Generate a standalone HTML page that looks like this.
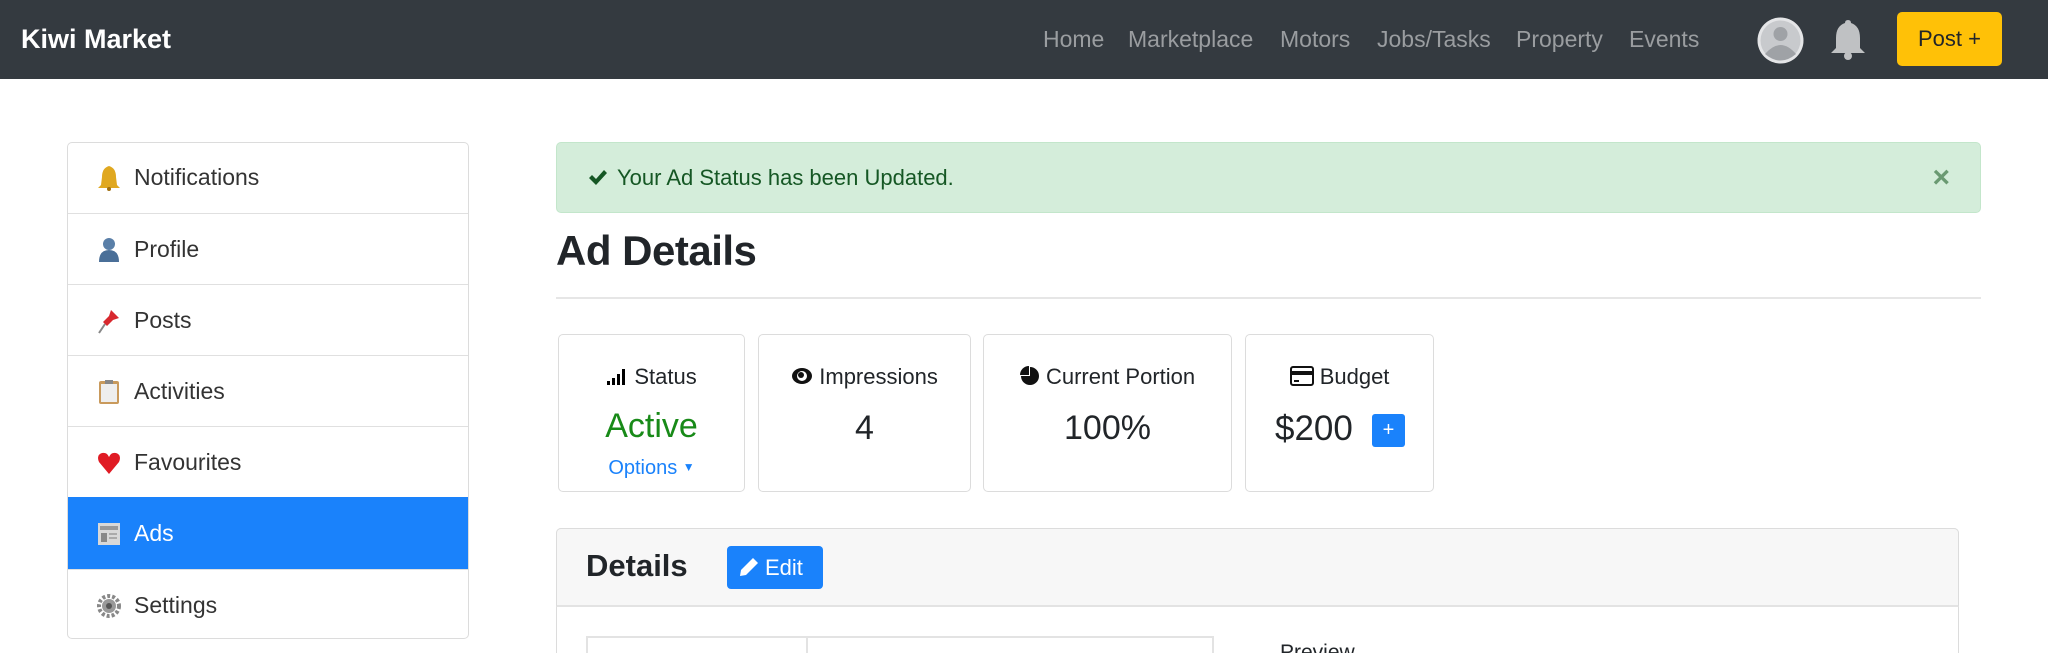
<!DOCTYPE html>
<html style="height:653px;overflow:hidden"><head><meta charset="utf-8"><style>
*{box-sizing:border-box;margin:0;padding:0}
body{width:2048px;height:653px;overflow:hidden;background:#fff;font-family:"Liberation Sans",sans-serif;color:#212529;position:relative}
.a{position:absolute}
.nav{left:0;top:0;width:2048px;height:79px;background:#343a40}
.brand{left:21px;top:24px;font-size:27px;font-weight:bold;color:#fff}
.nl{top:26px;font-size:23px;color:#9a9da0}
.post{left:1897px;top:12px;width:105px;height:54px;background:#ffc107;border-radius:5px;font-size:22px;color:#212529;text-align:center;line-height:54px}
.side{left:67px;top:142px;width:402px;height:497px;border:1px solid #dcdcdc;border-radius:5px;overflow:hidden}
.it{position:absolute;left:0;width:400px;height:71px;border-top:1px solid #e0e0e0;font-size:23px;color:#333;line-height:71px;padding-left:66px}
.it svg{position:absolute;left:29px;top:23px}
.alert{left:556px;top:142px;width:1425px;height:71px;background:#d4edda;border:1px solid #c3e6cb;border-radius:5px;color:#155724;font-size:22px;line-height:69px;padding-left:60px}
.card{top:334px;height:158px;border:1px solid #dcdcdc;border-radius:5px;text-align:center}
.ct{position:absolute;left:0;right:0;top:29px;font-size:22px;color:#212529}
</style></head><body>
<div class="a nav"></div>
<div class="a brand">Kiwi Market</div>
<div class="a nl" style="left:1043px">Home</div>
<div class="a nl" style="left:1128px">Marketplace</div>
<div class="a nl" style="left:1280px">Motors</div>
<div class="a nl" style="left:1377px">Jobs/Tasks</div>
<div class="a nl" style="left:1516px">Property</div>
<div class="a nl" style="left:1629px">Events</div>
<svg class="a" style="left:1757px;top:17px" width="47" height="47" viewBox="0 0 47 47"><circle cx="23.5" cy="23.5" r="23" fill="#e4e5e7"/><circle cx="23.5" cy="23.5" r="20" fill="#c8cacd"/><circle cx="23.5" cy="17" r="7" fill="#9fa2a6"/><path d="M8 37 Q23.5 19 39 37 Q23.5 50 8 37Z" fill="#9fa2a6"/></svg>
<svg class="a" style="left:1829px;top:18px" width="38" height="42" viewBox="0 0 38 42"><path d="M19 2 Q22 2 22 5 Q31 8 31 20 L31 30 L36 35 L2 35 L7 30 L7 20 Q7 8 16 5 Q16 2 19 2Z" fill="#bfc1c3"/><circle cx="19" cy="38" r="4" fill="#bfc1c3"/></svg>
<div class="a post">Post +</div>

<div class="a side">
<div class="it" style="top:-1px;border-top:none">
<svg width="24" height="26" viewBox="0 0 24 26"><path d="M12 1 Q19 3 19 12 L20 20 L23 23 L1 23 L4 20 L5 12 Q5 3 12 1Z" fill="#e0a820"/><circle cx="12" cy="24" r="2" fill="#a07010"/></svg>Notifications</div>
<div class="it" style="top:70px"><svg width="24" height="26" viewBox="0 0 24 26"><circle cx="12" cy="7" r="6" fill="#5a7fa8"/><path d="M2 25 Q2 13 12 13 Q22 13 22 25Z" fill="#4a6f98"/></svg>Profile</div>
<div class="it" style="top:141px"><svg width="24" height="26" viewBox="0 0 24 26"><path d="M14 2 L22 10 L16 12 L10 18 L6 14 L12 8Z" fill="#d8282e"/><path d="M8 16 L2 25" stroke="#888" stroke-width="2"/></svg>Posts</div>
<div class="it" style="top:212px"><svg width="24" height="26" viewBox="0 0 24 26"><rect x="2" y="2" width="20" height="23" rx="2" fill="#c99a5c"/><rect x="4" y="5" width="16" height="18" fill="#eee"/><rect x="8" y="1" width="8" height="4" fill="#888"/></svg>Activities</div>
<div class="it" style="top:283px"><svg width="24" height="26" viewBox="0 0 24 26"><path d="M12 24 L2 12 Q-1 5 5 3 Q10 2 12 7 Q14 2 19 3 Q25 5 22 12Z" fill="#e01b24"/></svg>Favourites</div>
<div class="it" style="top:354px;background:#1a82fb;color:#fff;border-top-color:#1a82fb;height:72px"><svg width="24" height="26" viewBox="0 0 24 26"><rect x="1" y="2" width="22" height="22" fill="#d8d8d8"/><rect x="3" y="5" width="18" height="4" fill="#999"/><rect x="4" y="12" width="6" height="9" fill="#888"/><rect x="12" y="12" width="8" height="2" fill="#aaa"/><rect x="12" y="16" width="8" height="2" fill="#aaa"/></svg>Ads</div>
<div class="it" style="top:426px"><svg width="24" height="26" viewBox="0 0 24 26"><circle cx="12" cy="13" r="10" fill="none" stroke="#888" stroke-width="4" stroke-dasharray="3 2"/><circle cx="12" cy="13" r="7" fill="#999"/><circle cx="12" cy="13" r="3" fill="#555"/></svg>Settings</div>
</div>

<div class="a alert"><svg class="a" style="left:31px;top:26px" width="20" height="18" viewBox="0 0 20 18"><path d="M1 9 L4 6 L8 10 L16 1 L19 4 L8 16Z" fill="#155724"/></svg>Your Ad Status has been Updated.<span class="a" style="right:30px;top:0;color:#6a9a72;font-size:30px;font-weight:bold">×</span></div>

<div class="a" style="left:556px;top:227px;font-size:42px;font-weight:bold;letter-spacing:-0.5px">Ad Details</div>
<div class="a" style="left:556px;top:297px;width:1425px;height:2px;background:#e6e6e6"></div>

<div class="a card" style="left:558px;width:187px">
<div class="ct"><svg width="22" height="18" viewBox="0 0 22 18" style="vertical-align:-1px"><rect x="1" y="14" width="3" height="4"/><rect x="6" y="11" width="3" height="7"/><rect x="11" y="7" width="3" height="11"/><rect x="16" y="2" width="3" height="16"/></svg> Status</div>
<div class="a" style="left:0;right:0;top:72px;font-size:34px;color:#188a18">Active</div>
<div class="a" style="left:0;right:0;top:122px;font-size:20px;color:#1a82fb">Options <span style="font-size:12px;vertical-align:3px">▼</span></div>
</div>
<div class="a card" style="left:758px;width:213px">
<div class="ct"><svg width="22" height="18" viewBox="0 0 22 18" style="vertical-align:-1px"><ellipse cx="11" cy="9" rx="10" ry="8" fill="#111"/><circle cx="11" cy="9" r="5" fill="#fff"/><circle cx="10" cy="8" r="3" fill="#111"/></svg> Impressions</div>
<div class="a" style="left:0;right:0;top:74px;font-size:34px">4</div>
</div>
<div class="a card" style="left:983px;width:249px">
<div class="ct"><svg width="20" height="20" viewBox="0 0 20 20" style="vertical-align:-2px"><path d="M10 10 L10 1 A9 9 0 1 1 1 10Z" fill="#111"/><path d="M9 9 L9 0 A9 9 0 0 0 0 9Z" fill="#111"/></svg> Current Portion</div>
<div class="a" style="left:0;right:0;top:74px;font-size:34px">100%</div>
</div>
<div class="a card" style="left:1245px;width:189px">
<div class="ct"><svg width="24" height="20" viewBox="0 0 24 20" style="vertical-align:-2px"><rect x="1" y="1" width="22" height="18" rx="2" fill="none" stroke="#111" stroke-width="2"/><rect x="1" y="5" width="22" height="4" fill="#111"/><rect x="4" y="14" width="5" height="2" fill="#111"/></svg> Budget</div>
<div class="a" style="left:29px;top:74px;font-size:35px">$200</div>
<div class="a" style="left:126px;top:79px;width:33px;height:33px;background:#1a82fb;border-radius:3px;color:#fff;font-size:20px;line-height:33px;text-align:center">+</div>
</div>

<div class="a" style="left:556px;top:528px;width:1403px;height:125px;overflow:hidden">
<div class="a" style="left:0;top:0;width:1403px;height:200px;border:1px solid #dcdcdc;border-radius:5px"></div>
<div class="a" style="left:0;top:0;width:1403px;height:79px;background:#f7f7f7;border:1px solid #dcdcdc;border-bottom:2px solid #e3e3e3;border-radius:5px 5px 0 0"></div>
<div class="a" style="left:30px;top:20px;font-size:31px;font-weight:bold">Details</div>
<div class="a" style="left:171px;top:18px;width:96px;height:43px;background:#1a82fb;border-radius:4px;color:#fff;font-size:22px;line-height:43px;padding-left:38px"><svg class="a" style="left:12px;top:11px" width="20" height="20" viewBox="0 0 20 20"><path d="M14 1 L19 6 L7 18 L1 19 L2 13Z" fill="#fff"/></svg>Edit</div>
<div class="a" style="left:30px;top:108px;width:628px;height:80px;border:2px solid #e3e3e3"></div>
<div class="a" style="left:250px;top:108px;width:2px;height:80px;background:#e3e3e3"></div>
<div class="a" style="left:724px;top:113px;font-size:21px">Preview</div>
</div>
</body></html>
